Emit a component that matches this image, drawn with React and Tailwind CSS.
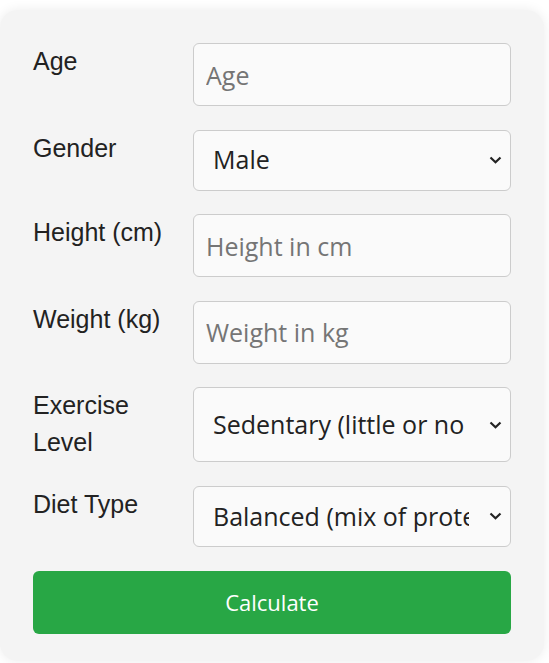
import React from 'react';

const sans = { fontFamily: '"Liberation Sans", Arial, sans-serif' };
const field = "w-full rounded-[6px] border border-[#cccccc] bg-[#fafafa] px-3 text-[25px] text-[#222] outline-none placeholder:text-[#757575] font-['Open_Sans',sans-serif]";

const Chevron = () => (
    <svg className="pointer-events-none absolute right-[9px] top-1/2 -translate-y-1/2" width="13" height="8" viewBox="0 0 13 8" fill="none" aria-hidden>
        <path d="M1.5 1.5 L6.5 6.2 L11.5 1.5" stroke="#222" strokeWidth="2.2" />
    </svg>
);

const Row = ({ label, children }) => (
    <div className="flex items-start">
        <label className="w-[160px] shrink-0 pr-2 text-[25px] leading-[37px] text-[#222] font-['Liberation_Sans',Arial,sans-serif]">
            {label}
        </label>
        <div className="flex-1">{children}</div>
    </div>
);

const Select = ({ value, options, h = 'h-[61px]' }) => (
    <div className="relative">
        <select
            defaultValue={value}
            className={`${field} ${h} appearance-none pl-[19px] pr-[41px]`}
        >
            {options.map((o) => <option key={o}>{o}</option>)}
        </select>
        <Chevron />
    </div>
);

export default function App() {
    return (
        <div className="min-h-screen bg-white pt-[10px]" style={sans}>
            <div className="flex h-[651px] w-[544px] flex-col gap-[23.6px] rounded-[18px] bg-[#f4f4f4] px-[33px] pt-[33px] shadow-[0_0_12px_rgba(0,0,0,0.08)]">
                <Row label="Age">
                    <input className={`${field} h-[63px]`} placeholder="Age" />
                </Row>
                <Row label="Gender">
                    <Select value="Male" options={['Male', 'Female']} />
                </Row>
                <Row label="Height (cm)">
                    <input className={`${field} h-[63px]`} placeholder="Height in cm" />
                </Row>
                <Row label="Weight (kg)">
                    <input className={`${field} h-[63px]`} placeholder="Weight in kg" />
                </Row>
                <Row label="Exercise Level">
                    <Select
                        h="h-[75px]"
                        value="Sedentary (little or no exercise)"
                        options={['Sedentary (little or no exercise)', 'Lightly active', 'Moderately active', 'Very active']}
                    />
                </Row>
                <Row label="Diet Type">
                    <Select
                        value="Balanced (mix of protein, carbs, fats)"
                        options={['Balanced (mix of protein, carbs, fats)', 'High protein', 'Low carb']}
                    />
                </Row>
                <button
                    type="button"
                    className="h-[63px] w-full rounded-[6px] bg-[#28a745] text-[22px] text-white font-['Open_Sans',sans-serif]"
                >
                    Calculate
                </button>
            </div>
        </div>
    );
}
